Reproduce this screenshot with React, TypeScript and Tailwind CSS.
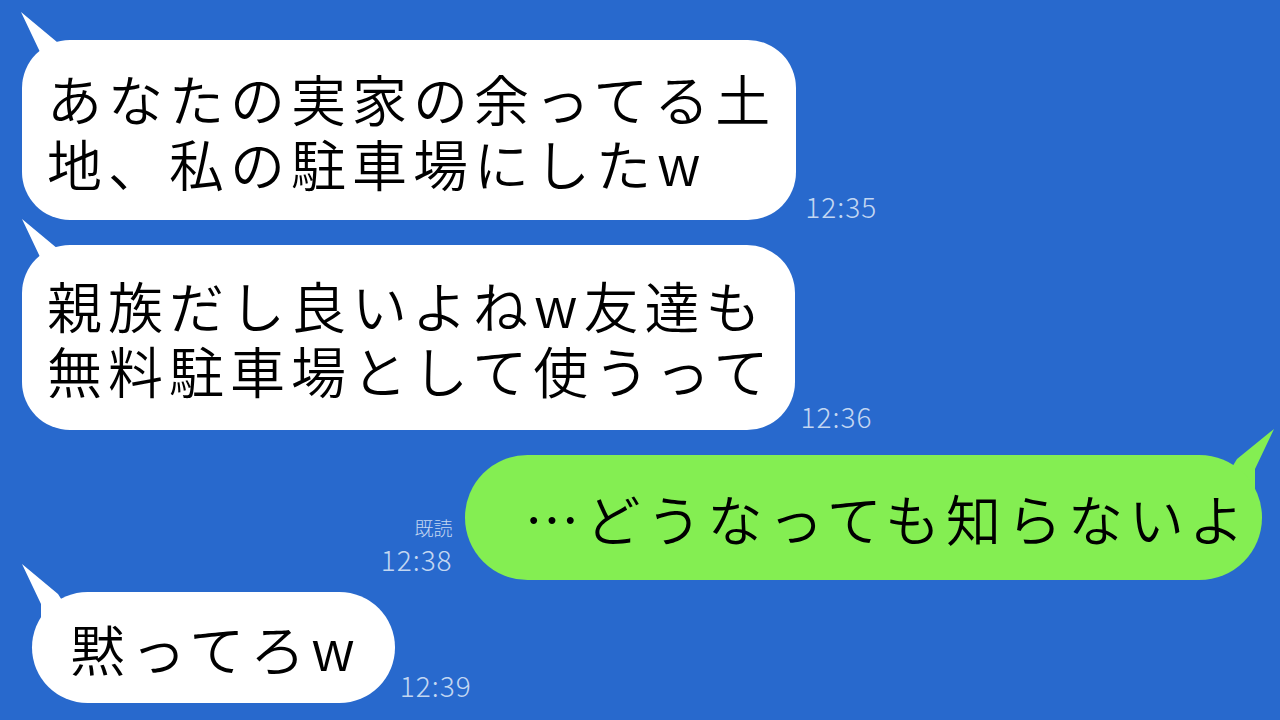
import React from "react";

const FONT = { fontFamily: '"Noto Sans CJK JP", "Noto Sans", sans-serif' };

function Time({ children, read }: { children: React.ReactNode; read?: boolean }) {
  return (
    <div className="flex flex-col items-end text-[#c3d7f2] font-light leading-none" style={FONT}>
      {read && <div className="text-[19px] mb-[8px]">既読</div>}
      <div className="text-[28px] tracking-[1px]">{children}</div>
    </div>
  );
}

export default function App() {
  return (
    <div className="w-[1280px] h-[720px] bg-[#2869cd] overflow-hidden flex flex-col" style={FONT}>
      {/* Row 1 */}
      <div className="flex items-end mt-[40px] ml-[22px] gap-[9px]">
        <div className="relative">
          <svg className="absolute" style={{ left: -4, top: -30 }} width={70} height={70} viewBox="0 0 70 70">
            <polygon points="3,2 39,32 60,65 22,65 22,42" fill="#ffffff" />
          </svg>
          <div className="relative bg-white rounded-[48px] pl-[25px] pr-[20px] py-[25px] text-black text-[55px] font-[350] leading-[65px] tracking-[6px] whitespace-nowrap">
            <div>あなたの実家の余ってる土</div>
            <div>地、私の駐車場にしたw</div>
          </div>
        </div>
        <div className="mb-[0px]">
          <Time>12:35</Time>
        </div>
      </div>

      {/* Row 2 */}
      <div className="flex items-end mt-[25px] ml-[22px] gap-[6px]">
        <div className="relative">
          <svg className="absolute" style={{ left: -3, top: -28 }} width={70} height={70} viewBox="0 0 70 70">
            <polygon points="3,2 39,32 60,65 22,65 22,42" fill="#ffffff" />
          </svg>
          <div className="relative bg-white rounded-[48px] pl-[25px] pr-[20px] pt-[27px] pb-[28px] text-black text-[55px] font-[350] leading-[65px] tracking-[6px] whitespace-nowrap">
            <div>親族だし良いよねw友達も</div>
            <div>無料駐車場として使うって</div>
          </div>
        </div>
        <div className="mb-[0px]">
          <Time>12:36</Time>
        </div>
      </div>

      {/* Row 3 */}
      <div className="flex items-end justify-end mt-[25px] mr-[18px] gap-[12px]">
        <div className="mb-[7px]">
          <Time read>12:38</Time>
        </div>
        <div className="relative">
          <svg className="absolute" style={{ right: -15, top: -28 }} width={70} height={70} viewBox="0 0 70 70">
            <polygon points="67,2 30,32 10,65 48,65 48,42" fill="#84ee52" />
          </svg>
          <div className="relative bg-[#84ee52] rounded-full pl-[60px] pr-[12px] pt-[30px] pb-[30px] text-black text-[55px] font-[350] leading-[65px] tracking-[6px] whitespace-nowrap">
            <div>…どうなっても知らないよ</div>
          </div>
        </div>
      </div>

      {/* Row 4 */}
      <div className="flex items-end mt-[12px] ml-[32px] gap-[5px]">
        <div className="relative">
          <svg className="absolute" style={{ left: -13, top: -30 }} width={70} height={70} viewBox="0 0 70 70">
            <polygon points="3,2 39,32 60,65 22,65 22,42" fill="#ffffff" />
          </svg>
          <div className="relative bg-white rounded-full pl-[38px] pr-[34px] py-[23px] text-black text-[55px] font-[350] leading-[65px] tracking-[6px] whitespace-nowrap">
            <div>黙ってろw</div>
          </div>
        </div>
        <div className="mb-[4px]">
          <Time>12:39</Time>
        </div>
      </div>
    </div>
  );
}
